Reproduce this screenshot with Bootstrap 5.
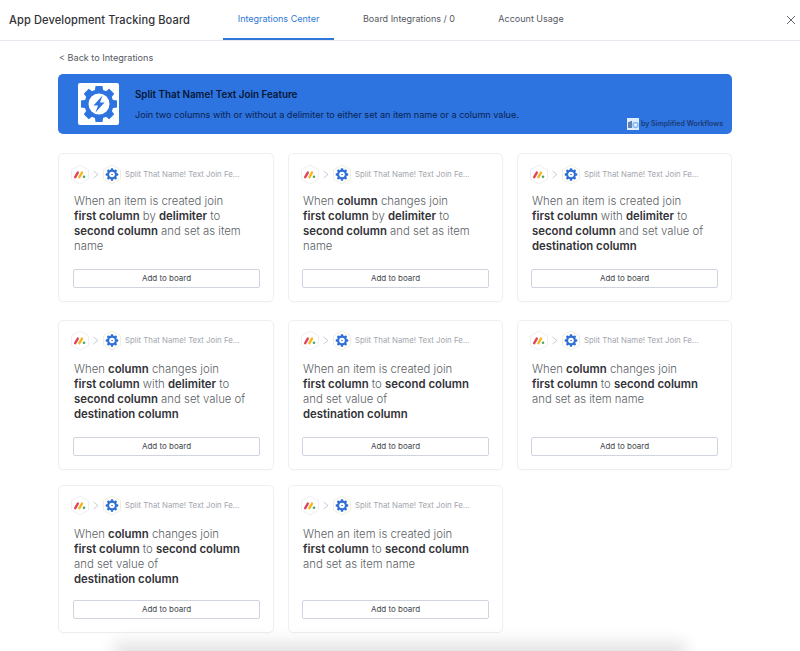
<!DOCTYPE html>
<html lang="en">
<head>
    <meta charset="UTF-8">
    <meta name="viewport" content="width=device-width, initial-scale=1.0">
    <title>App Development Tracking Board</title>
    <link href="https://cdn.jsdelivr.net/npm/bootstrap@5.3.0/dist/css/bootstrap.min.css" rel="stylesheet">
    <style>
        html, body { height: 100%; overflow: hidden; }
        body {
            font-family: "Inter", "Noto Sans", sans-serif;
            color: #323338;
            background: #fff;
            position: relative;
        }
        .top-bar {
            height: 41px;
            border-bottom: 1px solid #e6e9ef;
            padding-left: 9px;
            padding-right: 4px;
        }
        .board-name { font-size: 11.1px; font-weight: 500; width: 214px; letter-spacing: .1px; }
        .tab-item {
            font-size: 9px;
            color: #55585f;
            height: 40px;
            line-height: 37px;
            text-align: center;
            white-space: nowrap;
        }
        .tab-active { width: 111px; color: #2f78d9; border-bottom: 2px solid #2f78d9; }
        .tab-two { width: 150px; }
        .tab-three { width: 66px; margin-left: 14px; }
        .close-x { width: 10px; height: 10px; }
        .page-body { padding: 0 68px 0 58px; }
        .back-link { font-size: 9.1px; color: #55585f; height: 33px; padding: 10px 0 0 1px; line-height: 13px; }
        .hero-band {
            background: #2d74e0;
            height: 60px;
            border-radius: 5px;
            padding-left: 20px;
            color: #0a1c3d;
            position: relative;
        }
        .hero-logo { width: 41px; height: 42px; background: #fff; border-radius: 2px; margin-right: 16px; }
        .hero-title { font-size: 9.8px; font-weight: 600; color: #071634; margin-bottom: 6px; line-height: 14px; }
        .hero-text { font-size: 9.08px; line-height: 13px; color: #0b2250; }
        .hero-credit {
            position: absolute;
            right: 9px;
            bottom: 4px;
            font-size: 7px;
            font-weight: 600;
            color: #1c3a75;
            line-height: 12px;
        }
        .credit-logo { width: 12px; height: 12px; background: #dfeeff; margin-right: 2px; }
        .card-grid {
            display: grid;
            grid-template-columns: 216px 215px 215px;
            grid-template-rows: 149px 153px 148px;
            column-gap: 14px;
            row-gap: 15px;
            margin-top: 19px;
        }
        .flow-card {
            border: 1px solid #eeeff3;
            border-radius: 5px;
            padding: 10px 14px 13px 12px;
            box-shadow: 0 1px 2px rgba(0, 0, 0, .02);
        }
        .flow-head { height: 21px; margin-bottom: 9px; margin-left: -1px; }
        .flow-low { padding-top: 9px; }
        .flow-low .flow-head { margin-bottom: 11px; }
        .flow-mid { margin-top: 3px; }
        .hex-icon { width: 20px; height: 21px; flex: none; }
        .flow-chevron { width: 12px; height: 21px; flex: none; }
        .flow-title { font-size: 7.8px; color: #a3a6ae; margin-left: 3px; white-space: nowrap; }
        .flow-text {
            font-size: 11.35px;
            line-height: 15px;
            font-weight: 300;
            color: #5c5f66;
            padding-left: 3px;
            margin: 0;
            white-space: nowrap;
        }
        .flow-text b { font-weight: 600; color: #323338; }
        .add-btn {
            display: block;
            width: 187px;
            height: 19px;
            margin-left: 2px;
            margin-top: auto;
            padding: 0;
            font-size: 8px;
            line-height: 17px;
            color: #45474d;
            background: #fff;
            border: 1px solid #d0d4e0;
            border-radius: 2px;
        }
        /* second and third columns sit a pixel further left inside the card */
        .flow-card:not(:nth-child(3n+1)) .flow-text { padding-left: 2px; }
        .flow-card:not(:nth-child(3n+1)) .add-btn { margin-left: 1px; }
        .bottom-fade {
            position: absolute;
            left: 120px;
            right: 120px;
            bottom: -14px;
            height: 14px;
            box-shadow: 0 -3px 16px 6px rgba(0, 0, 0, .11);
        }
    </style>
</head>
<body>
    <!-- inline icon symbols -->
    <svg width="0" height="0" class="position-absolute">
        <symbol id="hexMonday" viewBox="0 0 20 21">
            <path d="M10 1 18.5 5.8V15.2L10 20 1.5 15.2V5.8Z" fill="#fff" stroke="#eeeff3"/>
            <path d="M5.2 13.2 7.8 8.6" stroke="#e2445c" stroke-width="2.4" stroke-linecap="round"/>
            <path d="M9.4 13.2 12 8.6" stroke="#f2b91e" stroke-width="2.4" stroke-linecap="round"/>
            <circle cx="14" cy="12.7" r="1.3" fill="#4fa36c"/>
        </symbol>
        <symbol id="hexGear" viewBox="0 0 20 21">
            <path d="M10 1 18.5 5.8V15.2L10 20 1.5 15.2V5.8Z" fill="#fff" stroke="#f1efdc"/>
            <g fill="#2f6fd6">
                <rect x="8.8" y="4.2" width="2.4" height="12.6" rx=".6"/>
                <rect x="8.8" y="4.2" width="2.4" height="12.6" rx=".6" transform="rotate(45 10 10.5)"/>
                <rect x="8.8" y="4.2" width="2.4" height="12.6" rx=".6" transform="rotate(90 10 10.5)"/>
                <rect x="8.8" y="4.2" width="2.4" height="12.6" rx=".6" transform="rotate(135 10 10.5)"/>
                <circle cx="10" cy="10.5" r="4.9"/>
            </g>
            <circle cx="10" cy="10.5" r="2.8" fill="#fff"/>
            <path d="M10.6 8.7 9 10.9H10.2L9.5 12.4 11.1 10.1H9.9Z" fill="#2f6fd6"/>
        </symbol>
        <symbol id="chev" viewBox="0 0 12 21">
            <path d="M3.5 7 8 10.5 3.5 14" fill="none" stroke="#c3c6d0" stroke-width=".9"/>
        </symbol>
    </svg>

    <div class="top-bar d-flex align-items-start">
        <div class="board-name align-self-center">App Development Tracking Board</div>
        <div class="tab-item tab-active">Integrations Center</div>
        <div class="tab-item tab-two">Board Integrations / 0</div>
        <div class="tab-item tab-three">Account Usage</div>
        <svg class="close-x ms-auto align-self-center" viewBox="0 0 10 10"><path d="M1 1 9 9M9 1 1 9" stroke="#55585f" stroke-width=".9"/></svg>
    </div>

    <div class="page-body">
        <div class="back-link">&lt; Back to Integrations</div>

        <div class="hero-band d-flex align-items-center">
            <div class="hero-logo d-flex align-items-center justify-content-center flex-shrink-0">
                <svg width="38" height="38" viewBox="0 0 38 38">
                    <g fill="#2d74e0">
                        <path d="M15.5 1H22.5L23.5 8H14.5Z"/>
                        <path d="M15.5 1H22.5L23.5 8H14.5Z" transform="rotate(45 19 19)"/>
                        <path d="M15.5 1H22.5L23.5 8H14.5Z" transform="rotate(90 19 19)"/>
                        <path d="M15.5 1H22.5L23.5 8H14.5Z" transform="rotate(135 19 19)"/>
                        <path d="M15.5 1H22.5L23.5 8H14.5Z" transform="rotate(180 19 19)"/>
                        <path d="M15.5 1H22.5L23.5 8H14.5Z" transform="rotate(225 19 19)"/>
                        <path d="M15.5 1H22.5L23.5 8H14.5Z" transform="rotate(270 19 19)"/>
                        <path d="M15.5 1H22.5L23.5 8H14.5Z" transform="rotate(315 19 19)"/>
                        <circle cx="19" cy="19" r="14.5"/>
                    </g>
                    <circle cx="19" cy="19" r="10.5" fill="#fff"/>
                    <path d="M22.5 10.5 13.5 20.5H18L15.5 27.5 24.5 17.5H20Z" fill="#2d74e0"/>
                </svg>
            </div>
            <div>
                <div class="hero-title">Split That Name! Text Join Feature</div>
                <div class="hero-text">Join two columns with or without a delimiter to either set an item name or a column value.</div>
            </div>
            <div class="hero-credit d-flex align-items-center">
                <svg class="credit-logo" viewBox="0 0 12 12"><path d="M2 4V10M4 3V10" stroke="#33518c" stroke-width="1.4"/><circle cx="8.5" cy="7" r="2.5" fill="none" stroke="#7fb8f5" stroke-width="1.4"/></svg>
                by Simplified Workflows
            </div>
        </div>

        <div class="card-grid">
            <div class="flow-card d-flex flex-column">
                <div class="flow-head d-flex align-items-center">
                    <svg class="hex-icon"><use href="#hexMonday"/></svg><svg class="flow-chevron"><use href="#chev"/></svg><svg class="hex-icon"><use href="#hexGear"/></svg>
                    <span class="flow-title">Split That Name! Text Join Fe...</span>
                </div>
                <p class="flow-text">When an item is created join<br><b>first column</b> by <b>delimiter</b> to<br><b>second column</b> and set as item<br>name</p>
                <button class="add-btn">Add to board</button>
            </div>
            <div class="flow-card d-flex flex-column">
                <div class="flow-head d-flex align-items-center">
                    <svg class="hex-icon"><use href="#hexMonday"/></svg><svg class="flow-chevron"><use href="#chev"/></svg><svg class="hex-icon"><use href="#hexGear"/></svg>
                    <span class="flow-title">Split That Name! Text Join Fe...</span>
                </div>
                <p class="flow-text">When <b>column</b> changes join<br><b>first column</b> by <b>delimiter</b> to<br><b>second column</b> and set as item<br>name</p>
                <button class="add-btn">Add to board</button>
            </div>
            <div class="flow-card d-flex flex-column">
                <div class="flow-head d-flex align-items-center">
                    <svg class="hex-icon"><use href="#hexMonday"/></svg><svg class="flow-chevron"><use href="#chev"/></svg><svg class="hex-icon"><use href="#hexGear"/></svg>
                    <span class="flow-title">Split That Name! Text Join Fe...</span>
                </div>
                <p class="flow-text">When an item is created join<br><b>first column</b> with <b>delimiter</b> to<br><b>second column</b> and set value of<br><b>destination column</b></p>
                <button class="add-btn">Add to board</button>
            </div>
            <div class="flow-card flow-low flow-mid d-flex flex-column">
                <div class="flow-head d-flex align-items-center">
                    <svg class="hex-icon"><use href="#hexMonday"/></svg><svg class="flow-chevron"><use href="#chev"/></svg><svg class="hex-icon"><use href="#hexGear"/></svg>
                    <span class="flow-title">Split That Name! Text Join Fe...</span>
                </div>
                <p class="flow-text">When <b>column</b> changes join<br><b>first column</b> with <b>delimiter</b> to<br><b>second column</b> and set value of<br><b>destination column</b></p>
                <button class="add-btn">Add to board</button>
            </div>
            <div class="flow-card flow-low flow-mid d-flex flex-column">
                <div class="flow-head d-flex align-items-center">
                    <svg class="hex-icon"><use href="#hexMonday"/></svg><svg class="flow-chevron"><use href="#chev"/></svg><svg class="hex-icon"><use href="#hexGear"/></svg>
                    <span class="flow-title">Split That Name! Text Join Fe...</span>
                </div>
                <p class="flow-text">When an item is created join<br><b>first column</b> to <b>second column</b><br>and set value of<br><b>destination column</b></p>
                <button class="add-btn">Add to board</button>
            </div>
            <div class="flow-card flow-low flow-mid d-flex flex-column">
                <div class="flow-head d-flex align-items-center">
                    <svg class="hex-icon"><use href="#hexMonday"/></svg><svg class="flow-chevron"><use href="#chev"/></svg><svg class="hex-icon"><use href="#hexGear"/></svg>
                    <span class="flow-title">Split That Name! Text Join Fe...</span>
                </div>
                <p class="flow-text">When <b>column</b> changes join<br><b>first column</b> to <b>second column</b><br>and set as item name</p>
                <button class="add-btn">Add to board</button>
            </div>
            <div class="flow-card flow-low d-flex flex-column">
                <div class="flow-head d-flex align-items-center">
                    <svg class="hex-icon"><use href="#hexMonday"/></svg><svg class="flow-chevron"><use href="#chev"/></svg><svg class="hex-icon"><use href="#hexGear"/></svg>
                    <span class="flow-title">Split That Name! Text Join Fe...</span>
                </div>
                <p class="flow-text">When <b>column</b> changes join<br><b>first column</b> to <b>second column</b><br>and set value of<br><b>destination column</b></p>
                <button class="add-btn">Add to board</button>
            </div>
            <div class="flow-card flow-low d-flex flex-column">
                <div class="flow-head d-flex align-items-center">
                    <svg class="hex-icon"><use href="#hexMonday"/></svg><svg class="flow-chevron"><use href="#chev"/></svg><svg class="hex-icon"><use href="#hexGear"/></svg>
                    <span class="flow-title">Split That Name! Text Join Fe...</span>
                </div>
                <p class="flow-text">When an item is created join<br><b>first column</b> to <b>second column</b><br>and set as item name</p>
                <button class="add-btn">Add to board</button>
            </div>
        </div>
    </div>

    <div class="bottom-fade"></div>

    <script src="https://cdn.jsdelivr.net/npm/bootstrap@5.3.0/dist/js/bootstrap.bundle.min.js"></script>
</body>
</html>
